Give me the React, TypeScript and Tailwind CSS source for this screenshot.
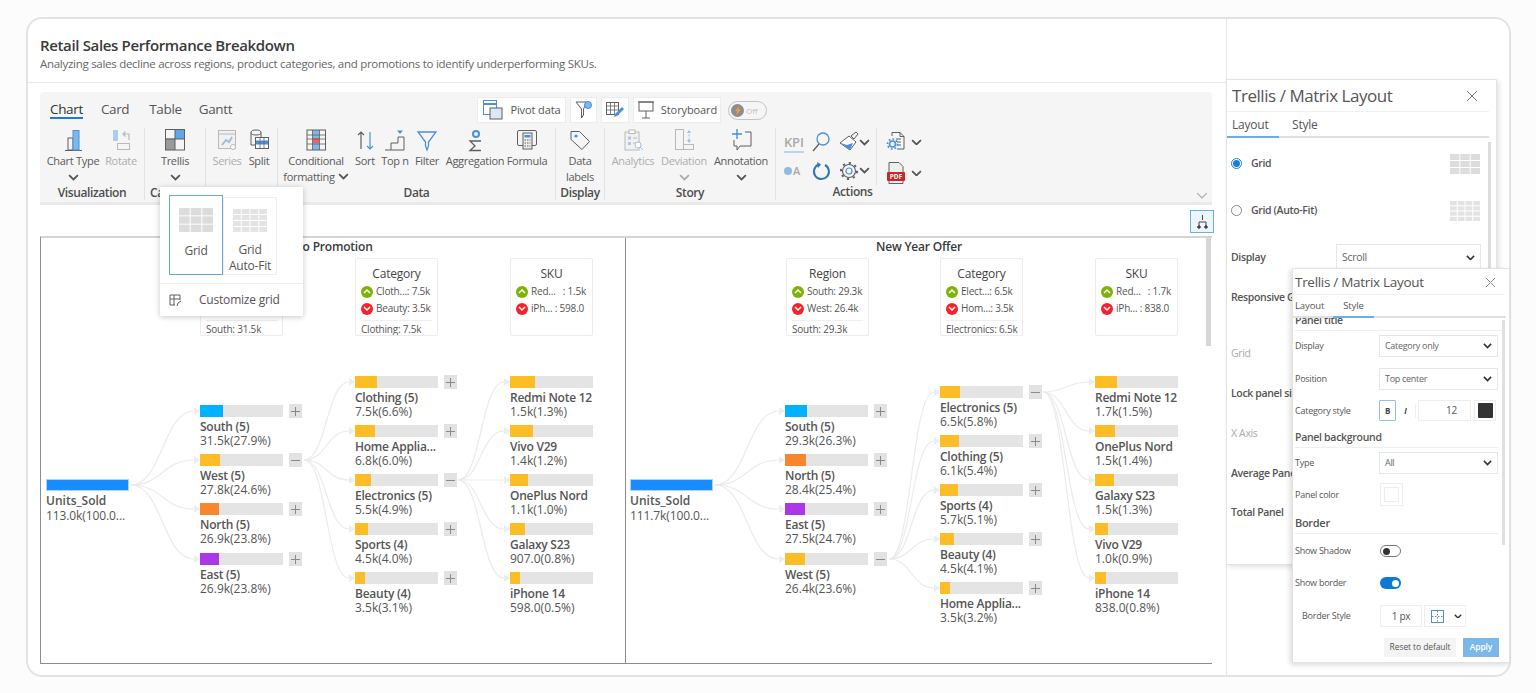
import React from "react";

type NodeD = { x: number; y: number; label: string; value: string; fill: number; color?: string; box?: "+" | "-" };

const Y = "#fdbd27";
const mk = (x: number, rows: [number, string, string, number, string?, ("+" | "-")?][]): NodeD[] =>
  rows.map(([y, label, value, fill, color, box]) => ({ x, y, label, value, fill, color: color ?? Y, box }));

const leftTree = {
  root: { x: 46, y: 485, label: "Units_Sold", value: "113.0k(100.0..." },
  l1: mk(200, [
    [411, "South (5)", "31.5k(27.9%)", 23, "#00b2ff", "+"],
    [460, "West (5)", "27.8k(24.6%)", 20, Y, "-"],
    [509, "North (5)", "26.9k(23.8%)", 19, "#f7862f", "+"],
    [559, "East (5)", "26.9k(23.8%)", 19, "#ab37e8", "+"],
  ]),
  from1: 460,
  l2: mk(355, [
    [382, "Clothing (5)", "7.5k(6.6%)", 22, Y, "+"],
    [431, "Home Applia...", "6.8k(6.0%)", 20, Y, "+"],
    [480, "Electronics (5)", "5.5k(4.9%)", 16, Y, "-"],
    [529, "Sports (4)", "4.5k(4.0%)", 13, Y, "+"],
    [578, "Beauty (4)", "3.5k(3.1%)", 10, Y, "+"],
  ]),
  from2: 480,
  l3: mk(510, [
    [382, "Redmi Note 12", "1.5k(1.3%)", 25],
    [431, "Vivo V29", "1.4k(1.2%)", 23],
    [480, "OnePlus Nord", "1.1k(1.0%)", 18],
    [529, "Galaxy S23", "907.0(0.8%)", 15],
    [578, "iPhone 14", "598.0(0.5%)", 10],
  ]),
};

const rightTree = {
  root: { x: 630, y: 485, label: "Units_Sold", value: "111.7k(100.0..." },
  l1: mk(785, [
    [411, "South (5)", "29.3k(26.3%)", 22, "#00b2ff", "+"],
    [460, "North (5)", "28.4k(25.4%)", 21, "#f7862f", "+"],
    [509, "East (5)", "27.5k(24.7%)", 20, "#ab37e8", "+"],
    [559, "West (5)", "26.4k(23.6%)", 20, Y, "-"],
  ]),
  from1: 559,
  l2: mk(940, [
    [392, "Electronics (5)", "6.5k(5.8%)", 20, Y, "-"],
    [441, "Clothing (5)", "6.1k(5.4%)", 19, Y, "+"],
    [490, "Sports (4)", "5.7k(5.1%)", 18, Y, "+"],
    [539, "Beauty (4)", "4.5k(4.1%)", 14, Y, "+"],
    [588, "Home Applia...", "3.5k(3.2%)", 10, Y, "+"],
  ]),
  from2: 392,
  l3: mk(1095, [
    [382, "Redmi Note 12", "1.7k(1.5%)", 22],
    [431, "OnePlus Nord", "1.5k(1.4%)", 20],
    [480, "Galaxy S23", "1.5k(1.3%)", 19],
    [529, "Vivo V29", "1.0k(0.9%)", 13],
    [578, "iPhone 14", "838.0(0.8%)", 11],
  ]),
};

const Chev = ({ c = "#555", w = 11, sw = 1.6 }: { c?: string; w?: number; sw?: number }) => (
  <svg width={w} height={w * 0.6} viewBox="0 0 10 6" fill="none" stroke={c} strokeWidth={sw} className="shrink-0">
    <path d="M1 1l4 4 4-4" />
  </svg>
);

function Tree({ t, ox, oy }: { t: typeof leftTree; ox: number; oy: number }) {
  const link = (x0: number, y0: number, x1: number, y1: number, k: string) => {
    const m = (x0 + x1) / 2;
    return (
      <g key={k}>
        <path d={`M${x0 - ox} ${y0 - oy}C${m - ox} ${y0 - oy} ${m - ox} ${y1 - oy} ${x1 - ox} ${y1 - oy}`} stroke="#ebebeb" strokeWidth="1.2" fill="none" />
        <path d={`M${x1 - ox} ${y1 - oy - 4}l6 4-6 4z`} fill="#ededed" />
      </g>
    );
  };
  const all = [...t.l1, ...t.l2, ...t.l3];
  return (
    <>
      <svg className="absolute inset-0 w-full h-full">
        {t.l1.map((n, i) => link(t.root.x + 85, t.root.y, n.x - 6, n.y, "a" + i))}
        {t.l2.map((n, i) => link(t.l1[0].x + 104, t.from1, n.x - 6, n.y, "b" + i))}
        {t.l3.map((n, i) => link(t.l2[0].x + 103, t.from2, n.x - 6, n.y, "c" + i))}
      </svg>
      <div className="absolute" style={{ left: t.root.x - ox, top: t.root.y - 6 - oy }}>
        <div className="w-[83px] h-3 bg-[#1a8cff] border border-[#a9d4fb]" />
        <div className="mt-[3px] text-[12px] leading-[14px] font-semibold text-[#555]">{t.root.label}</div>
        <div className="text-[12px] leading-[15px] text-[#555] whitespace-nowrap tracking-[-0.1px]">{t.root.value}</div>
      </div>
      {all.map((n) => (
        <div key={n.x + n.label} className="absolute w-[83px]" style={{ left: n.x - ox, top: n.y - 6 - oy }}>
          <div className="h-3 bg-[#e4e4e4]">
            <div className="h-full" style={{ width: n.fill, background: n.color }} />
          </div>
          {n.box && (
            <div className="absolute left-[89px] -top-[1px] w-[13px] h-[14px] bg-[#e2e2e2] flex items-center justify-center">
              <svg width="9" height="9" viewBox="0 0 9 9" stroke="#8a8a8a" strokeWidth="1">
                <path d={n.box === "+" ? "M0 4.5h9M4.5 0v9" : "M0 4.5h9"} />
              </svg>
            </div>
          )}
          <div className="mt-[3px] text-[12px] leading-[14px] font-semibold text-[#555] whitespace-nowrap tracking-[-0.25px]">{n.label}</div>
          <div className="text-[12px] leading-[14px] text-[#555] whitespace-nowrap">{n.value}</div>
        </div>
      ))}
    </>
  );
}

const Badge = ({ up }: { up?: boolean }) => (
  <span className={`w-[12px] h-[12px] rounded-full flex items-center justify-center shrink-0 ${up ? "bg-[#7cb305]" : "bg-[#f5222d]"}`}>
    <svg width="8" height="5" viewBox="0 0 8 5" fill="none" stroke="#fff" strokeWidth="1.5">
      <path d={up ? "M1 4l3-3 3 3" : "M1 1l3 3 3-3"} />
    </svg>
  </span>
);

function InfoCard({ x, oy, ox, title, up, down, foot }: { x: number; ox: number; oy: number; title: string; up: string; down: string; foot?: string }) {
  return (
    <div className="absolute w-[83px] h-[78px] bg-white border border-[#ececec] rounded-[2px] px-[5px] overflow-hidden" style={{ left: x - ox, top: 258 - oy }}>
      <div className="text-center text-[12px] leading-[14px] mt-[8px] text-[#444] tracking-[-0.2px]">{title}</div>
      <div className="flex items-center gap-[3px] mt-[3px] h-[15px] text-[10px] text-[#555] whitespace-pre tracking-[-0.2px]">
        <Badge up />
        {up}
      </div>
      <div className="flex items-center gap-[3px] mt-[2px] h-[15px] text-[10px] text-[#555] whitespace-pre tracking-[-0.2px]">
        <Badge />
        {down}
      </div>
      {foot && <div className="border-t border-[#efefef] mt-[4px] pt-[2px] text-[10px] leading-[13px] text-[#555] whitespace-nowrap tracking-[-0.2px]">{foot}</div>}
    </div>
  );
}

function GridGlyph({ cols, rows, w, h, c = "#dcdcdc" }: { cols: number; rows: number; w: number; h: number; c?: string }) {
  const cw = (w - (cols - 1)) / cols;
  const ch = (h - (rows - 1)) / rows;
  const cells = [];
  for (let i = 0; i < cols; i++) for (let j = 0; j < rows; j++) cells.push(<rect key={i + "-" + j} x={i * (cw + 1)} y={j * (ch + 1)} width={cw} height={ch} fill={c} />);
  return <svg width={w} height={h} className="shrink-0">{cells}</svg>;
}

const B = "#4a90d9";
const LB = "#7db8e8";
const G = "#5f5f5f";
const D = "#b9b9b9";
const I = ({ children, w = 24, h = 24 }: { children: React.ReactNode; w?: number; h?: number }) => (
  <svg width={w} height={h} viewBox={`0 0 ${w} ${h}`} fill="none" className="shrink-0">{children}</svg>
);

const icons = {
  chart: <I><path d="M4 22.5h17" stroke={G} /><rect x="7" y="10" width="5" height="12" stroke={G} /><rect x="12" y="2.5" width="6" height="19.5" fill={LB} stroke={B} /></I>,
  rotate: <I><rect x="4" y="2" width="5" height="11" fill="#a9cdee" /><path d="M20 12V6h-6m2.5-2.5L14 6l2.5 2.5" stroke={D} strokeWidth="1.2" /><rect x="8.5" y="15.5" width="12" height="6" stroke={D} /></I>,
  trellis: <I><rect x="3" y="10.5" width="9" height="11.5" fill="#9a9a9a" /><rect x="12" y="2" width="9" height="9" fill="#5da8e8" /><rect x="2.5" y="1.5" width="19" height="20.5" stroke={G} /><path d="M12 1.5V22M2.5 11h19" stroke={G} /></I>,
  series: <I><rect x="3.5" y="2.5" width="17" height="18" fill="#f1f1f1" stroke={D} /><path d="M3.5 6h17" stroke={D} /><path d="M7 17l4-5 3 2 3-5" stroke="#9dbfdc" strokeWidth="2" /><circle cx="18" cy="19" r="2.5" fill="#fff" stroke={D} /></I>,
  split: <I><ellipse cx="9" cy="4.5" rx="5" ry="2.5" stroke={G} /><path d="M4 4.5V17h4M14 4.5V9" stroke={G} /><rect x="8.5" y="9.5" width="13" height="11" fill="#fff" stroke={G} /><rect x="9" y="12.5" width="12" height="4" fill={B} /><path d="M13 9.5v11M17 9.5v11" stroke={G} strokeWidth=".8" /></I>,
  cond: <I><rect x="8.5" y="2" width="7" height="20" fill={LB} /><rect x="9" y="10" width="6" height="5" fill="#f0616d" /><rect x="3" y="2" width="18.5" height="20" stroke={G} /><path d="M3 7h18.5M3 11h18.5M3 16h18.5M8.5 2v20M15.5 2v20" stroke={G} strokeWidth=".8" /></I>,
  sort: <I><path d="M8 21V4M5 7l3-3 3 3" stroke={G} strokeWidth="1.2" /><path d="M17 4v17M14 18l3 3 3-3" stroke={B} strokeWidth="1.2" /></I>,
  topn: <I><path d="M2 22h19V9h-6v6H8v7" stroke={G} /><path d="M14 2.5h6l-3 3.5z" fill={B} /></I>,
  filter: <I><path d="M3 4h18l-7.5 10v4L12 22l-1.5-4v-4z" stroke={B} strokeWidth="1.3" /></I>,
  agg: <I><path d="M18 13H7l5 5-5 4.5h11" stroke={G} strokeWidth="1.3" /><circle cx="13" cy="6" r="3" stroke={B} strokeWidth="2" /></I>,
  formula: <I><rect x="2.5" y="2.5" width="19" height="15" rx="1.5" stroke={G} /><rect x="8" y="5" width="9" height="16" fill="#eee" stroke={G} /><rect x="9.5" y="7" width="6" height="2.5" fill={B} /><path d="M9.5 12h6M9.5 15h6M9.5 18h6" stroke={G} strokeDasharray="1.5 1" /></I>,
  labels: <I><path d="M3 3.5h8.5l10 10-7.5 8-11-10z" stroke={G} /><circle cx="8" cy="8" r="1.6" fill={B} /></I>,
  analytics: <I><rect x="4" y="4" width="14" height="18" stroke={D} fill="#f1f1f1" /><rect x="8" y="2" width="6" height="3.5" fill="#fff" stroke={D} /><rect x="7" y="8.5" width="3" height="3" fill="#a9c9e6" /><rect x="7" y="14" width="3" height="3" fill="#a9c9e6" /><path d="M12 10h4M12 15h2" stroke={D} /><circle cx="17" cy="17" r="3" fill="#fff" stroke="#9dbfdc" /><path d="M19 19l3 3" stroke="#9dbfdc" /></I>,
  deviation: <I><rect x="3.5" y="1.5" width="8" height="20" stroke={D} /><rect x="11.5" y="16.5" width="10" height="5" stroke={D} /><path d="M17 3v11" stroke="#9dbfdc" strokeDasharray="2 1.5" /><path d="M15 5l2-3 2 3zM15 12l2 3 2-3z" fill="#9dbfdc" /></I>,
  annot: <I><path d="M16 4h6v14H11l-3 4v-4H5v-6" stroke={G} /><path d="M8 1v10M3 6h10" stroke={B} strokeWidth="1.4" /></I>,
  search: <I w={20} h={22}><circle cx="12" cy="8" r="6" stroke={B} strokeWidth="1.3" /><path d="M8 13l-6 7" stroke={G} strokeWidth="1.3" /></I>,
  brush: <I w={20} h={22}><path d="M12 5l5-4 2 2-4 5z" stroke={G} /><path d="M10 5l7 6-6 8-10-7z" stroke={G} fill="#fff" /><path d="M2 12l6 2 6-2-3 7z" fill={B} /></I>,
  refresh: <I w={20} h={22}><path d="M8 4.5a7.5 7.5 0 1 0 6 .5" stroke="#2f77b9" strokeWidth="2" /><path d="M6 2l4 2.5-3 3.5z" fill="#2f77b9" /></I>,
  gear: <I w={20} h={22}><circle cx="10" cy="11" r="3" stroke={B} strokeWidth="1.2" /><circle cx="10" cy="11" r="6.5" stroke={G} strokeWidth="1.1" /><circle cx="10" cy="11" r="8" stroke={G} strokeWidth="2" strokeDasharray="2.2 4" /></I>,
  doc: <I w={20} h={22}><path d="M6 5V1.5h8l4 4V18H11" stroke={G} /><path d="M14 1.5v4h4" stroke={G} /><path d="M10 8h5M11 11h4M11 14h4" stroke={G} /><circle cx="6.5" cy="13" r="3" stroke={B} strokeWidth="1.6" /><circle cx="6.5" cy="13" r="5" stroke={B} strokeWidth="1.6" strokeDasharray="1.8 2" /></I>,
  pdf: (
    <I w={20} h={24}>
      <path d="M3 12V1.5h10l4 4V12M3 19v3.5h14V19" stroke={G} fill="#eee" />
      <rect x="1" y="11" width="18" height="9" rx="1" fill="#d32222" />
      <text x="10" y="18" fontSize="6.5" fontWeight="700" fill="#fff" textAnchor="middle">PDF</text>
    </I>
  ),
};

function RBtn({ w, icon, l1, l2, chev, off }: { w: number; icon: React.ReactNode; l1: string; l2?: string; chev?: boolean; off?: boolean }) {
  const tc = off ? "text-[#adadad]" : "text-[#5a5a5a]";
  return (
    <div className="flex flex-col items-center shrink-0" style={{ width: w }}>
      <div className="h-[25px] flex items-start justify-center">{icon}</div>
      <div className={`h-[16px] leading-[16px] text-[11px] tracking-[-0.3px] whitespace-nowrap ${tc}`}>{l1}</div>
      {l2 && <div className={`h-[15px] leading-[15px] text-[11px] tracking-[-0.3px] whitespace-nowrap flex items-center gap-[3px] ${tc}`}>{l2}{chev && <Chev />}</div>}
      {!l2 && chev && <div className="h-[17px] flex items-center"><Chev c={off ? "#aaa" : "#555"} /></div>}
    </div>
  );
}

function Group({ w, label, pl = 0, sep = true, children, labelLeft }: { w: number; label: string; pl?: number; sep?: boolean; children: React.ReactNode; labelLeft?: number }) {
  return (
    <div className={`flex flex-col h-[72px] shrink-0 ${sep ? "border-r border-[#e2e2e2]" : ""}`} style={{ width: w }}>
      <div className="flex h-[58px]" style={{ paddingLeft: pl }}>{children}</div>
      <div className="h-[14px] leading-[14px] text-[12px] font-semibold text-[#4d4d4d] text-center tracking-[-0.4px] whitespace-nowrap" style={labelLeft ? { textAlign: "left", paddingLeft: labelLeft } : undefined}>{label}</div>
    </div>
  );
}

function TopBtn({ w, children }: { w: number; children: React.ReactNode }) {
  return <div className="h-[26px] bg-white border border-[#ececec] flex items-center justify-center gap-[6px] shrink-0 text-[11px] text-[#555]" style={{ width: w }}>{children}</div>;
}

function Ribbon() {
  return (
    <div className="ml-[12px] mt-[9px] w-[1172px] h-[113px] bg-[#f5f5f5] border-b-[3px] border-[#e9e9e9] rounded-t-[4px] relative">
      <div className="h-[36px] flex">
        <div className="w-[437px] pl-[10px] flex text-[13.5px] text-[#555] pt-[7px] tracking-[-0.35px]">
          <div className="h-[20px] leading-[20px] border-b-2 border-[#1a7fd4] text-[#333] font-medium">Chart</div>
          <div className="ml-[18px] leading-[20px] h-[20px]">Card</div>
          <div className="ml-[20px] leading-[20px] h-[20px]">Table</div>
          <div className="ml-[17px] leading-[20px] h-[20px]">Gantt</div>
        </div>
        <div className="flex items-start gap-[4px] pt-[5px]">
          <TopBtn w={89}>
            <svg width="22" height="22" viewBox="0 0 22 22" fill="none"><rect x="1.5" y="1.5" width="13" height="14" fill="#fff" stroke={B} /><path d="M1.5 5h13" stroke={B} strokeWidth="2" /><rect x="8" y="9" width="12" height="11" fill="#dbe9f6" stroke={G} /></svg>
            <span className="tracking-[-0.1px]">Pivot data</span>
          </TopBtn>
          <TopBtn w={27}>
            <svg width="18" height="20" viewBox="0 0 18 20" fill="none"><path d="M1 2h11l-3.5 7v6L6.5 18V9z" stroke={G} /><circle cx="13" cy="5" r="3.5" fill={LB} stroke={B} /></svg>
          </TopBtn>
          <TopBtn w={28}>
            <svg width="20" height="20" viewBox="0 0 20 20" fill="none"><rect x="1.5" y="2.5" width="12" height="12" stroke={G} /><path d="M1.5 6h12M1.5 10h12M5.5 2.5v12M9.5 2.5v12" stroke={G} strokeWidth=".8" /><path d="M9 17l1-3 7-7 2 2-7 7z" fill={B} /></svg>
          </TopBtn>
          <TopBtn w={88}>
            <svg width="18" height="20" viewBox="0 0 18 20" fill="none"><rect x="2" y="2" width="14" height="9" stroke={G} /><path d="M1 2h16M9 11v7M5 18h8" stroke={G} /></svg>
            <span className="tracking-[-0.1px]">Storyboard</span>
          </TopBtn>
          <div className="ml-[3px] mt-[4px] w-[39px] h-[19px] rounded-full border-[1.5px] border-[#c3c3c3] flex items-center gap-[2px] px-[2px]">
            <span className="w-[13px] h-[13px] rounded-full bg-[#8d8d8d] flex items-center justify-center">
              <svg width="6" height="9" viewBox="0 0 6 9"><path d="M4 0L0 5h2L1.5 9 6 3.5H3.5z" fill="#f2994a" /></svg>
            </span>
            <span className="text-[8px] text-[#bdbdbd]">Off</span>
          </div>
        </div>
      </div>
      <div className="flex">
        <Group w={105} label="Visualization" pl={5}>
          <RBtn w={56} icon={icons.chart} l1="Chart Type" chev />
          <RBtn w={40} icon={icons.rotate} l1="Rotate" off />
        </Group>
        <Group w={60} label="Category" sep={false} labelLeft={5}>
          <RBtn w={60} icon={icons.trellis} l1="Trellis" chev />
        </Group>
        <div className="w-[73px] h-[58px] flex pl-[5px] border-x border-[#e2e2e2] shrink-0">
          <RBtn w={32} icon={icons.series} l1="Series" off />
          <RBtn w={32} icon={icons.split} l1="Split" />
        </div>
        <Group w={278} label="Data" pl={4}>
          <RBtn w={68} icon={icons.cond} l1="Conditional" l2="formatting" chev />
          <RBtn w={30} icon={icons.sort} l1="Sort" />
          <RBtn w={30} icon={icons.topn} l1="Top n" />
          <RBtn w={34} icon={icons.filter} l1="Filter" />
          <RBtn w={62} icon={icons.agg} l1="Aggregation" />
          <RBtn w={42} icon={icons.formula} l1="Formula" />
        </Group>
        <Group w={49} label="Display">
          <RBtn w={48} icon={icons.labels} l1="Data" l2="labels" />
        </Group>
        <Group w={171} label="Story" pl={3}>
          <RBtn w={50} icon={icons.analytics} l1="Analytics" off />
          <RBtn w={52} icon={icons.deviation} l1="Deviation" chev off />
          <RBtn w={62} icon={icons.annot} l1="Annotation" chev />
        </Group>
        <div className="w-[149px] flex flex-col shrink-0">
          <div className="flex h-[57px]">
            <div className="w-[101px] border-r border-[#e2e2e2] pl-[8px] flex flex-col">
              <div className="h-[29px] flex items-center">
                <div className="w-[27px] text-[13px] leading-[15px] font-semibold text-[#a9a9a9]"><span className="border-b-2 border-[#bcd3ea] tracking-[-0.2px]">KPI</span></div>
                <div className="w-[28px]">{icons.search}</div>
                <div className="flex items-center">{icons.brush}<Chev /></div>
              </div>
              <div className="h-[29px] flex items-center">
                <div className="w-[27px] flex items-center gap-[1px] text-[11px] font-semibold text-[#a9a9a9]"><span className="w-[8px] h-[8px] rounded-full bg-[#8fbbe3]" />A</div>
                <div className="w-[28px]">{icons.refresh}</div>
                <div className="flex items-center">{icons.gear}<Chev /></div>
              </div>
            </div>
            <div className="pl-[9px] flex flex-col">
              <div className="h-[29px] flex items-center gap-[5px]">{icons.doc}<Chev /></div>
              <div className="h-[29px] flex items-center gap-[5px] pt-[5px]">{icons.pdf}<Chev /></div>
            </div>
          </div>
          <div className="h-[14px] leading-[14px] text-[12px] font-semibold text-[#4d4d4d] text-center tracking-[-0.4px] pl-[4px]">Actions</div>
        </div>
      </div>
      <div className="absolute right-[4px] bottom-[3px]"><Chev c="#aaa" w={12} sw={1} /></div>
    </div>
  );
}

function TrellisMenu() {
  return (
    <div className="absolute left-[160px] top-[187px] w-[143px] h-[129px] bg-white shadow-[0_1px_6px_rgba(0,0,0,0.22)] z-10 text-[12px] text-[#555] tracking-[-0.2px]">
      <div className="flex pl-[9px] pt-[8px] items-end">
        <div className="w-[54px] h-[80px] border-[1.5px] border-[#63a9e3] flex flex-col items-center pt-[12px]">
          <GridGlyph cols={3} rows={3} w={34} h={24} />
          <div className="mt-[11px] leading-[16px]">Grid</div>
        </div>
        <div className="w-[54px] h-[78px] border border-[#eeeeee] flex flex-col items-center pt-[11px] text-center">
          <GridGlyph cols={4} rows={4} w={34} h={23} c="#e3e3e3" />
          <div className="mt-[10px] leading-[16px]">Grid<br />Auto-Fit</div>
        </div>
      </div>
      <div className="mt-[8px] border-t border-[#eeeeee] h-[33px] flex items-center pl-[9px] gap-[17px]">
        <svg width="13" height="13" viewBox="0 0 13 13" fill="none" stroke={G}><path d="M1 1h10v5M1 1v10h5M1 5h10M5 1v10" /><path d="M8 12l1-3 3-2" /></svg>
        <span>Customize grid</span>
      </div>
    </div>
  );
}

const Sel = ({ w, text, h = 22, fs = 9 }: { w: number; text: string; h?: number; fs?: number }) => (
  <div className="border border-[#e6e6e6] flex items-center justify-between pl-[5px] pr-[5px] text-[#666] font-normal tracking-[-0.3px] shrink-0" style={{ width: w, height: h, fontSize: fs }}>
    {text}
    <Chev c="#333" w={9} sw={1.8} />
  </div>
);

function Panel1() {
  const L = "flex items-center pl-[4px] text-[10.5px] font-semibold text-[#555] tracking-[-0.35px] whitespace-nowrap";
  return (
    <div className="absolute left-[1226px] top-[79px] w-[271px] h-[486px] bg-white border border-[#e3e3e3] shadow-[2px_2px_5px_rgba(0,0,0,0.12)]">
      <div className="h-[32px] w-[262px] flex items-center justify-between pl-[5px] pr-[12px] border-b border-[#f0f0f0] pt-[1px]">
        <span className="text-[17px] text-[#555] whitespace-nowrap tracking-[-0.45px]">Trellis / Matrix Layout</span>
        <svg width="10" height="10" viewBox="0 0 10 10" stroke="#777"><path d="M0 0l10 10M10 0L0 10" /></svg>
      </div>
      <div className="h-[26px] w-[262px] flex border-b-2 border-[#e0e0e0] text-[12px] text-[#555] tracking-[-0.2px]">
        <div className="w-[52px] pl-[5px] border-b-2 border-[#6ab0e6] h-[26px] leading-[25px]">Layout</div>
        <div className="pl-[13px] leading-[25px]">Style</div>
      </div>
      <div className="relative flex flex-col w-[262px] pt-[2px]">
        <div className="absolute right-[-2px] top-[4px] w-[3px] h-[416px] bg-[#dcdcdc]" />
        <div className={L + " h-[47px] pr-[9px]"}>
          <span className="w-[11px] h-[11px] rounded-full border border-[#1a7fd4] bg-white flex items-center justify-center mr-[9px]"><span className="w-[7px] h-[7px] rounded-full bg-[#1a7fd4]" /></span>
          Grid
          <span className="ml-auto"><GridGlyph cols={3} rows={3} w={30} h={20} /></span>
        </div>
        <div className={L + " h-[47px] pr-[9px]"}>
          <span className="w-[11px] h-[11px] rounded-full border border-[#888] mr-[9px]" />
          Grid (Auto-Fit)
          <span className="ml-auto"><GridGlyph cols={4} rows={4} w={30} h={20} c="#e3e3e3" /></span>
        </div>
        <div className={L + " h-[47px] pr-[8px] justify-between"}>
          Display
          <Sel w={145} h={27} text="Scroll" fs={10.5} />
        </div>
        <div className={L + " h-[33px]"}>Responsive Grid</div>
        <div className="h-[20px]" />
        <div className={L + " h-[40px] !text-[#aaa] !font-normal"}>Grid</div>
        <div className={L + " h-[40px]"}>Lock panel size</div>
        <div className={L + " h-[40px] !text-[#aaa] !font-normal"}>X Axis</div>
        <div className={L + " h-[39px]"}>Average Panel</div>
        <div className={L + " h-[40px]"}>Total Panel</div>
      </div>
    </div>
  );
}

function Panel2() {
  const row = "flex items-center justify-between text-[9px] text-[#555] font-medium tracking-[-0.25px] whitespace-nowrap";
  const head = "text-[10.5px] font-semibold text-[#555] border-b border-[#eeeeee] flex items-center tracking-[-0.3px]";
  return (
    <div className="absolute left-[1292px] top-[268px] w-[218px] h-[395px] bg-white border border-[#e3e3e3] shadow-[-2px_2px_5px_rgba(0,0,0,0.14)] z-20">
      <div className="h-[26px] flex items-center justify-between pl-[2px] pr-[10px] border-b border-[#f2f2f2] mr-[4px] pt-[1px]">
        <span className="text-[13.5px] text-[#555] whitespace-nowrap tracking-[-0.3px]">Trellis / Matrix Layout</span>
        <svg width="9" height="9" viewBox="0 0 9 9" stroke="#888"><path d="M0 0l9 9M9 0L0 9" /></svg>
      </div>
      <div className="h-[23px] flex border-b-2 border-[#e0e0e0] text-[9.5px] text-[#555] mr-[3px] tracking-[-0.1px]">
        <div className="w-[40px] pl-[2px] leading-[21px]">Layout</div>
        <div className="w-[41px] text-center border-b-2 border-[#6ab0e6] h-[23px] leading-[21px]">Style</div>
      </div>
      <div className="relative h-[312px] overflow-hidden pl-[2px] pr-[11px]">
        <div className="absolute right-[4px] top-[2px] w-[3px] h-[225px] bg-[#e0e0e0]" />
        <div className={head + " h-[21px] -mt-[8px] leading-[14px] mr-[-6px]"}>Panel title</div>
        <div className={row + " mt-[4px]"}>Display<Sel w={119} text="Category only" /></div>
        <div className={row + " mt-[11px]"}>Position<Sel w={119} text="Top center" /></div>
        <div className={row + " mt-[10px] h-[21px]"}>
          Category style
          <div className="flex items-center w-[119px] shrink-0">
            <span className="w-[17px] h-[21px] border border-[#8cc1ec] rounded-[1px] flex items-center justify-center font-bold text-[8px] text-[#444]">B</span>
            <span className="w-[19px] text-center italic font-bold text-[8px] text-[#444]">I</span>
            <span className="w-[3px] h-[14px] border-l border-[#eee]" />
            <span className="w-[53px] h-[21px] border border-[#eee] flex items-center justify-end pr-[13px] text-[10px] font-normal">12</span>
            <span className="ml-[3px] w-[22px] h-[21px] border border-[#eee] flex items-center justify-center"><span className="w-[15px] h-[15px] bg-[#333] rounded-[1px]" /></span>
          </div>
        </div>
        <div className={head + " h-[20px] mt-[7px]"}>Panel background</div>
        <div className={row + " mt-[4px]"}>Type<Sel w={119} text="All" /></div>
        <div className={row + " mt-[9px] !justify-start"}>
          <span className="w-[85px]">Panel color</span>
          <span className="w-[23px] h-[23px] border border-[#eee] flex items-center justify-center"><span className="w-[15px] h-[15px] border border-[#eee]" /></span>
        </div>
        <div className={head + " h-[20px] mt-[8px] text-[11px]"}>Border</div>
        <div className={row + " mt-[9px] !justify-start h-[16px]"}>
          <span className="w-[85px]">Show Shadow</span>
          <span className="w-[21px] h-[12px] rounded-full border border-[#777] flex items-center pl-[2px]"><span className="w-[7px] h-[7px] rounded-full bg-[#333]" /></span>
        </div>
        <div className={row + " mt-[16px] !justify-start h-[16px]"}>
          <span className="w-[85px]">Show border</span>
          <span className="w-[21px] h-[12px] rounded-full bg-[#0f78d4] flex items-center justify-end pr-[2px]"><span className="w-[7px] h-[7px] rounded-full bg-white" /></span>
        </div>
        <div className={row + " mt-[14px] !justify-start h-[22px]"}>
          <span className="w-[85px] pl-[7px]">Border Style</span>
          <span className="w-[42px] h-[22px] border border-[#eee] flex items-center justify-center text-[10px] font-normal gap-[4px]">1 px</span>
          <span className="ml-[2px] w-[42px] h-[22px] border border-[#eee] flex items-center pl-[6px] gap-[10px]">
            <svg width="13" height="13" viewBox="0 0 13 13" fill="none"><rect x=".5" y=".5" width="12" height="12" stroke={B} /><path d="M6.5 1v11M1 6.5h11" stroke="#888" strokeDasharray="1.5 1.5" /></svg>
            <Chev c="#333" w={8} sw={1.8} />
          </span>
        </div>
      </div>
      <div className="flex justify-end pr-[10px] gap-[7px] h-[19px] mt-[8px] text-[8.5px] tracking-[-0.1px]">
        <div className="w-[72px] bg-[#f4f4f4] flex items-center justify-center text-[#555] font-medium whitespace-nowrap">Reset to default</div>
        <div className="w-[36px] bg-[#7ab8ea] flex items-center justify-center text-white font-semibold">Apply</div>
      </div>
    </div>
  );
}

export default function App() {
  return (
    <div className="relative w-[1536px] h-[693px] overflow-hidden bg-[#fcfcfc] font-['Open_Sans','Noto_Sans',sans-serif] pt-[17px] pl-[26px]">
      <div className="w-[1485px] h-[660px] bg-white border-2 border-[#e3e3e3] rounded-[16px] flex overflow-hidden">
        <div className="w-[1199px] h-full border-r border-[#e6e6e6] shrink-0">
          <div className="h-[64px] border-b border-[#e8e8e8] pl-[12px] pt-[16px]">
            <div className="text-[15px] leading-[20px] font-semibold text-[#3a3a3a] tracking-[-0.35px]">Retail Sales Performance Breakdown</div>
            <div className="text-[11.5px] leading-[16px] text-[#666] tracking-[-0.28px] mt-[1px]">Analyzing sales decline across regions, product categories, and promotions to identify underperforming SKUs.</div>
          </div>
          <Ribbon />
          <div className="h-[31px] pl-[1162px] pt-[5px]">
            <div className="w-[24px] h-[23px] border-[1.5px] border-[#6ab0e6] bg-[#ecf5fc] flex items-center justify-center">
              <svg width="13" height="15" viewBox="0 0 13 15" fill="none" stroke="#444"><path d="M6.5 1v5M3 13V8h7v5" /><circle cx="3" cy="13" r="1.3" fill="#444" /><circle cx="10" cy="13" r="1.3" fill="#444" /></svg>
            </div>
          </div>
          <div className="ml-[12px] w-[1172px] h-[428px] border-t-2 border-t-[#d4d4d4] border-l border-l-[#8c8c8c] border-b border-b-[#8c8c8c] flex relative">
            <div className="relative w-[585px] h-full border-r border-[#8c8c8c] shrink-0">
              <div className="absolute left-0 right-0 top-[1px] text-center text-[12px] leading-[16px] font-semibold text-[#3a3a3a] tracking-[-0.2px]">No Promotion</div>
              <InfoCard x={200} ox={41} oy={238} title="Region" up="South: 31.5k" down="East: 26.9k" foot="South: 31.5k" />
              <InfoCard x={355} ox={41} oy={238} title="Category" up="Cloth...: 7.5k" down="Beauty: 3.5k" foot="Clothing: 7.5k" />
              <InfoCard x={510} ox={41} oy={238} title="SKU" up="Red...   : 1.5k" down="iPh... : 598.0" />
              <Tree t={leftTree} ox={41} oy={238} />
            </div>
            <div className="relative flex-1 h-full">
              <div className="absolute left-0 right-0 top-[1px] text-center text-[12px] leading-[16px] font-semibold text-[#3a3a3a] tracking-[-0.2px]">New Year Offer</div>
              <InfoCard x={786} ox={626} oy={238} title="Region" up="South: 29.3k" down="West: 26.4k" foot="South: 29.3k" />
              <InfoCard x={940} ox={626} oy={238} title="Category" up="Elect...: 6.5k" down="Hom...: 3.5k" foot="Electronics: 6.5k" />
              <InfoCard x={1095} ox={626} oy={238} title="SKU" up="Red...   : 1.7k" down="iPh... : 838.0" />
              <Tree t={rightTree} ox={626} oy={238} />
              <div className="absolute right-[1px] top-0 w-[5px] h-[108px] bg-[#d6d6d6]" />
            </div>
          </div>
        </div>
      </div>
      <TrellisMenu />
      <Panel1 />
      <Panel2 />
    </div>
  );
}
